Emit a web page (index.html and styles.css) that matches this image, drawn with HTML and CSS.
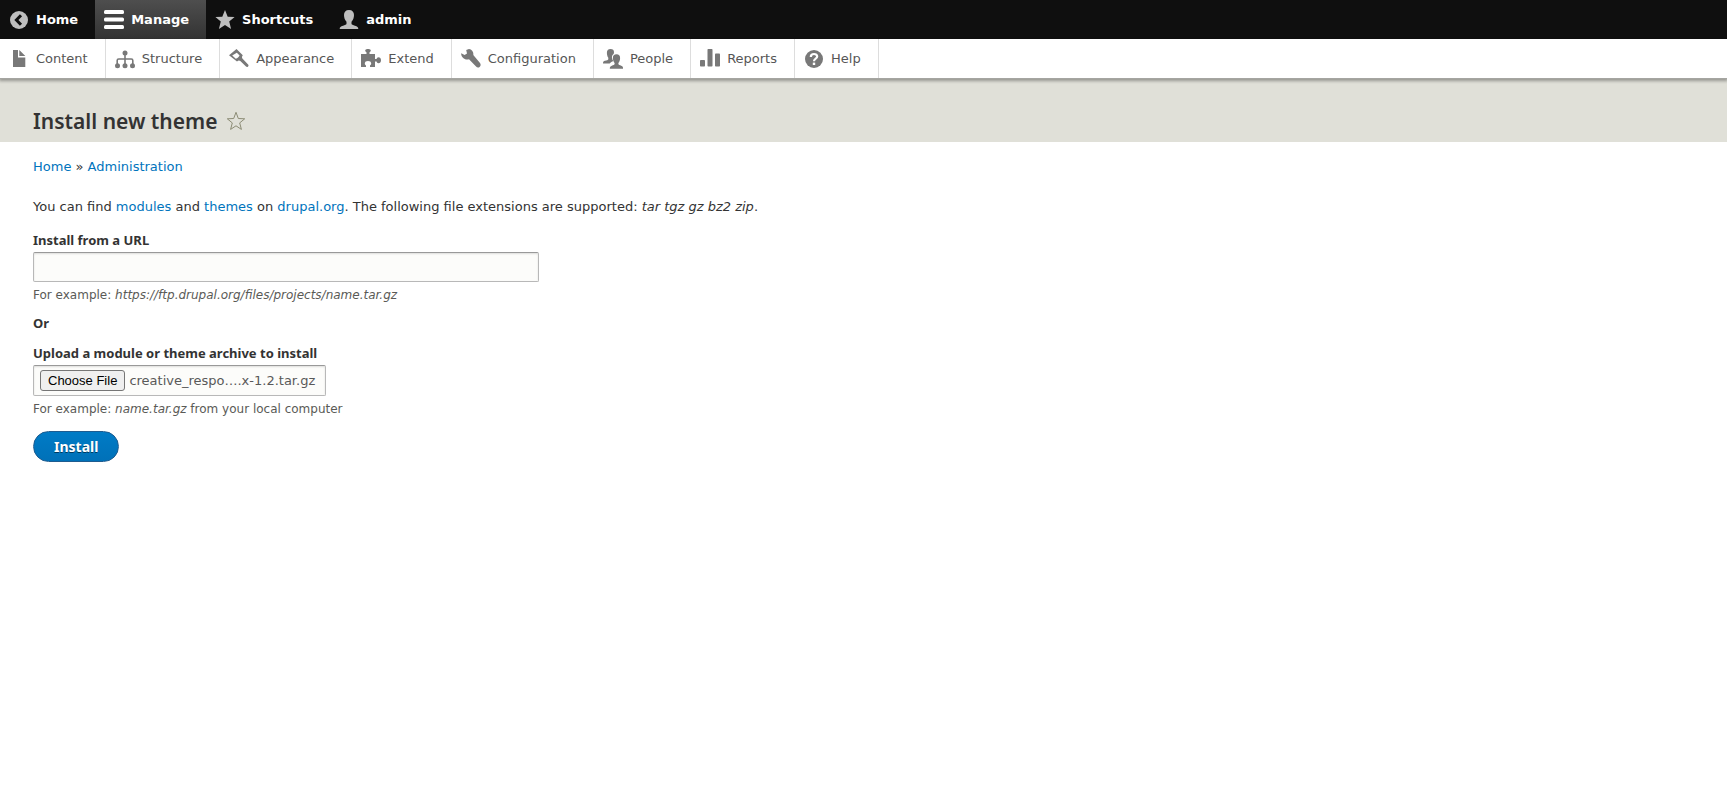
FILE: index.html
```html
<!DOCTYPE html>
<html lang="en">
<head>
<meta charset="utf-8">
<title>Install new theme</title>
<link rel="stylesheet" href="styles.css">
</head>
<body>
<nav class="bar" aria-label="Toolbar">
  <a class="tab" href="#"><svg class="icon" viewBox="0 0 20 20"><circle cx="10" cy="10" r="9" fill="#bebebe"/><path d="M12 5.2 7.4 10l4.6 4.8" fill="none" stroke="#0f0f0f" stroke-width="3"/></svg>Home</a>
  <a class="tab tab-active" href="#"><svg class="icon" viewBox="0 0 20 20" fill="#fff"><rect y="0" width="20" height="4" rx="1.5"/><rect y="7.5" width="20" height="4" rx="1.5"/><rect y="15" width="20" height="4" rx="1.5"/></svg>Manage</a>
  <a class="tab" href="#"><svg class="icon" viewBox="0 0 20 20" fill="#bebebe"><path d="M10 0l2.7 6.8 6.9.2-5.4 4.6 1.9 7.4L10 15l-6.1 4 1.9-7.4L.4 7l6.9-.2z"/></svg>Shortcuts</a>
  <a class="tab" href="#"><svg class="icon" viewBox="0 0 20 20" fill="#bebebe"><path d="M10 0c3.4 0 5 2 5 5 0 2.500-.8 5-2.500 6.800v2c.2 1 1.500 1.300 3.500 2 2.300.7 3.300 1.500 3.300 3.200H.7c0-1.700 1-2.500 3.300-3.200 2-.7 3.300-1 3.500-2v-2C5.800 10 5 7.500 5 5c0-3 1.600-5 5-5z"/></svg>admin</a>
</nav>
<nav class="tray" aria-label="Administration menu">
  <a class="item" href="#"><svg class="icon" viewBox="0 0 20 20" fill="#787878"><path d="M4 1h5v7.500h7.300V18H4zM10.300 1l6 6h-6z"/></svg>Content</a>
  <a class="item" href="#"><svg class="icon" viewBox="0 0 20 20" fill="#787878"><circle cx="10" cy="4" r="2.500"/><path d="M10 5v11M2.200 16v-4.500q0-1.500 1.500-1.500h12.600q1.500 0 1.500 1.500V16" fill="none" stroke="#787878" stroke-width="1.600"/><circle cx="2.500" cy="16.700" r="2.500"/><circle cx="10" cy="16.700" r="2.500"/><circle cx="17.500" cy="16.700" r="2.500"/></svg>Structure</a>
  <a class="item" href="#"><svg class="icon" viewBox="0 0 20 20" fill="#787878"><path fill-rule="evenodd" d="M7.500 0 13.800 6.300c-1 1.300-1.100 2.600-.2 3.500l5.500 5.600c1.300 1.400-.7 3.400-2.100 2.100L11.300 12c-.9-.8-2-.8-3.300.5L0 6.200zM7.800 3.800 3.200 6.600l3.600 3.200c1.700-.8 3-2 3.800-3.400z"/></svg>Appearance</a>
  <a class="item" href="#"><svg class="icon" viewBox="0 0 20 20" fill="#787878"><path d="M0 5h5.500V3.200C4.800 2.900 4.200 2.400 4.200 1.500 4.200.5 5.500 0 7 0s2.800.5 2.800 1.500c0 .9-.6 1.400-1.300 1.700V5H14v5h1.500c.3-.9.9-1.800 2-1.800 1.500 0 2.500 1.300 2.500 3s-1 3-2.500 3c-1.100 0-1.700-.9-2-1.700H14V18H9v-1.500c.9-.5 1.200-1.200 1.200-2C10.200 12.800 8.900 12 7 12s-3.200.8-3.200 2.500c0 .8.300 1.500 1.200 2V18H0z"/></svg>Extend</a>
  <a class="item" href="#"><svg class="icon" viewBox="0 0 20 20" fill="#787878"><path d="M.2 4.200 3.600 6 6 4.500 5.200 1 8 .1c3 .3 4.800 3 4.300 6l6.500 7.600c1.400 1.700.8 3.400-.2 4.200-1 .8-2.600.8-3.800-.7L8 10.200c-1.600.6-3.900.5-5.500-.9C.9 8 0 6 .2 4.200z"/></svg>Configuration</a>
  <a class="item" href="#"><svg class="icon" viewBox="0 0 20 20" fill="#787878"><path d="M7.500 0c2.300 0 3.500 1.200 3.500 3.200 0 .6-.2 1.200-.4 1.800C8.800 6 8.600 8 9.300 10c.3 1 .8 1.500 1 2-1.200.8-2.800 1.200-3.600 2.500H0c0-1.700.7-2.300 2-2.700 1.500-.5 3.300-.6 3.300-1.600V8.800C4.300 7.500 3.900 5.300 3.900 3.800 3.900 1.500 5 0 7.500 0z"/><path d="M13.500 5.200c2.400 0 3.600 1.300 3.600 3.700 0 1.900-.6 3.800-1.700 5v1.200c0 1 1.500 1.200 2.800 1.700 1.300.4 2 1.200 2 3H6.800c0-1.800.7-2.600 2-3 1.300-.5 2.800-.7 2.800-1.700v-1.200c-1.100-1.200-1.700-3.100-1.700-5 0-2.400 1.200-3.700 3.600-3.700z"/></svg>People</a>
  <a class="item" href="#"><svg class="icon" viewBox="0 0 20 20" fill="#787878"><rect x="0" y="11" width="5" height="6.500" rx=".8"/><rect x="7.500" y="0" width="5" height="17.500" rx=".8"/><rect x="15" y="4.500" width="5" height="13" rx=".8"/></svg>Reports</a>
  <a class="item" href="#"><svg class="icon" viewBox="0 0 20 20"><circle cx="10" cy="10" r="9" fill="#787878"/><path d="M6.800 8c0-2 1.400-3 3.200-3s3.200 1 3.200 2.600C13.200 9.800 10 9.700 10 12.300" fill="none" stroke="#fff" stroke-width="2.200"/><rect x="8.800" y="13.600" width="2.400" height="2.400" fill="#fff"/></svg>Help</a>
</nav>
<header class="head">
  <h1 class="title">Install new theme</h1>
  <button class="fav" type="button" aria-label="Add to shortcuts"><svg viewBox="0 0 20 20" width="20" height="20"><path d="M10 1.300l2.300 6.200 6.400.3-5 4.100 1.700 6.500L10 14.800l-5.400 3.600 1.700-6.500-5-4.100 6.400-.3z" fill="none" stroke="#8b8b74" stroke-width="1" stroke-linejoin="round"/></svg></button>
</header>
<main class="main">
  <nav class="crumbs" aria-label="Breadcrumb"><a href="#">Home</a> » <a href="#">Administration</a></nav>
  <p class="intro">You can find <a href="#">modules</a> and <a href="#">themes</a> on <a href="#">drupal.org</a>. The following file extensions are supported: <em>tar tgz gz bz2 zip</em>.</p>
  <form class="form">
    <label class="label" for="url">Install from a URL</label>
    <input class="text" id="url" type="url">
    <div class="note">For example: <em>https://ftp.drupal.org/files/projects/name.tar.gz</em></div>
    <div class="or">Or</div>
    <label class="label" for="archive">Upload a module or theme archive to install</label>
    <div class="file">
      <span class="choose">Choose File</span><span class="name">creative_respo….x-1.2.tar.gz</span>
      <input class="picker" id="archive" type="file">
    </div>
    <div class="note">For example: <em>name.tar.gz</em> from your local computer</div>
    <button class="submit" type="button">Install</button>
  </form>
</main>
</body>
</html>
```
FILE: styles.css
```css
* { box-sizing: border-box; }
body {
  margin: 0;
  background: #fff;
  color: #333;
  font: 13px/20px "Lucida Grande", "Lucida Sans Unicode", "DejaVu Sans", sans-serif;
}
a { color: #0074bd; text-decoration: none; }
.bar, .tray {
  display: flex;
  height: 39px;
  font-family: Verdana, "DejaVu Sans", sans-serif;
}
.bar { background: #0f0f0f; font-weight: bold; }
.tray {
  position: relative;
  background: #fff;
  box-shadow: 0 1px 0 #a5a5a1, 0 2px 3px 1px rgba(0, 0, 0, .33);
}
.tab, .item {
  display: flex;
  align-items: center;
  gap: 7px;
  padding: 0 17px 0 9px;
}
.tab { color: #fff; }
.tab-active { background: linear-gradient(#4e4e4e, #333); }
.item { color: #565656; border-right: 1px solid #ddd; }
.icon { width: 20px; height: 20px; flex: none; }
.head {
  display: flex;
  align-items: center;
  gap: 9px;
  padding: 28px 33px 6px;
  background: #e0e0d8;
}
.title, .label, .or, .submit { font-family: "Noto Sans", sans-serif; }
.title { margin: 0; font-size: 21px; line-height: 30px; font-weight: 600; }
.fav { display: flex; padding: 0; border: 0; background: none; }
.main { padding: 15px 33px; }
.crumbs { margin-bottom: 20px; }
.intro { margin: 0 0 13px; }
.label { display: block; font-weight: bold; margin-bottom: 2px; }
.text {
  display: block;
  width: 506px;
  max-width: 100%;
  height: 30px;
  padding: 4px 7px;
  border: 1px solid #b8b8b8;
  border-top-color: #999;
  border-radius: 2px;
  background: #fcfcfa;
  box-shadow: inset 0 1px 2px rgba(0, 0, 0, .125);
  font: inherit;
}
.note { margin: 3px 0 8px; color: #5a5a56; font-size: 12px; }
.or { font-weight: bold; margin-bottom: 10px; }
.file {
  position: relative;
  display: flex;
  align-items: center;
  gap: 4px;
  width: 293px;
  height: 31px;
  padding: 0 6px;
  border: 1px solid #b8b8b8;
  border-top-color: #999;
  border-radius: 2px;
  background: #fcfcfa;
  box-shadow: inset 0 1px 2px rgba(0, 0, 0, .125);
  color: #595959;
}
.choose {
  padding: 0 7px;
  border: 1px solid #767676;
  border-radius: 3px;
  background: #efefef;
  color: #000;
  font: 13px/19px Arial, "Liberation Sans", sans-serif;
}
.name { white-space: nowrap; }
.picker { position: absolute; inset: 0; width: 100%; height: 100%; opacity: 0; cursor: pointer; }
.submit {
  margin-top: 4px;
  padding: 4px 20px;
  border: 1px solid #1e5c90;
  border-radius: 16px;
  background: linear-gradient(#007bc6, #0071b8);
  color: #fff;
  font-size: 14px;
  font-weight: bold;
  line-height: 21px;
  text-shadow: 0 1px rgba(0, 0, 0, .5);
}
```
